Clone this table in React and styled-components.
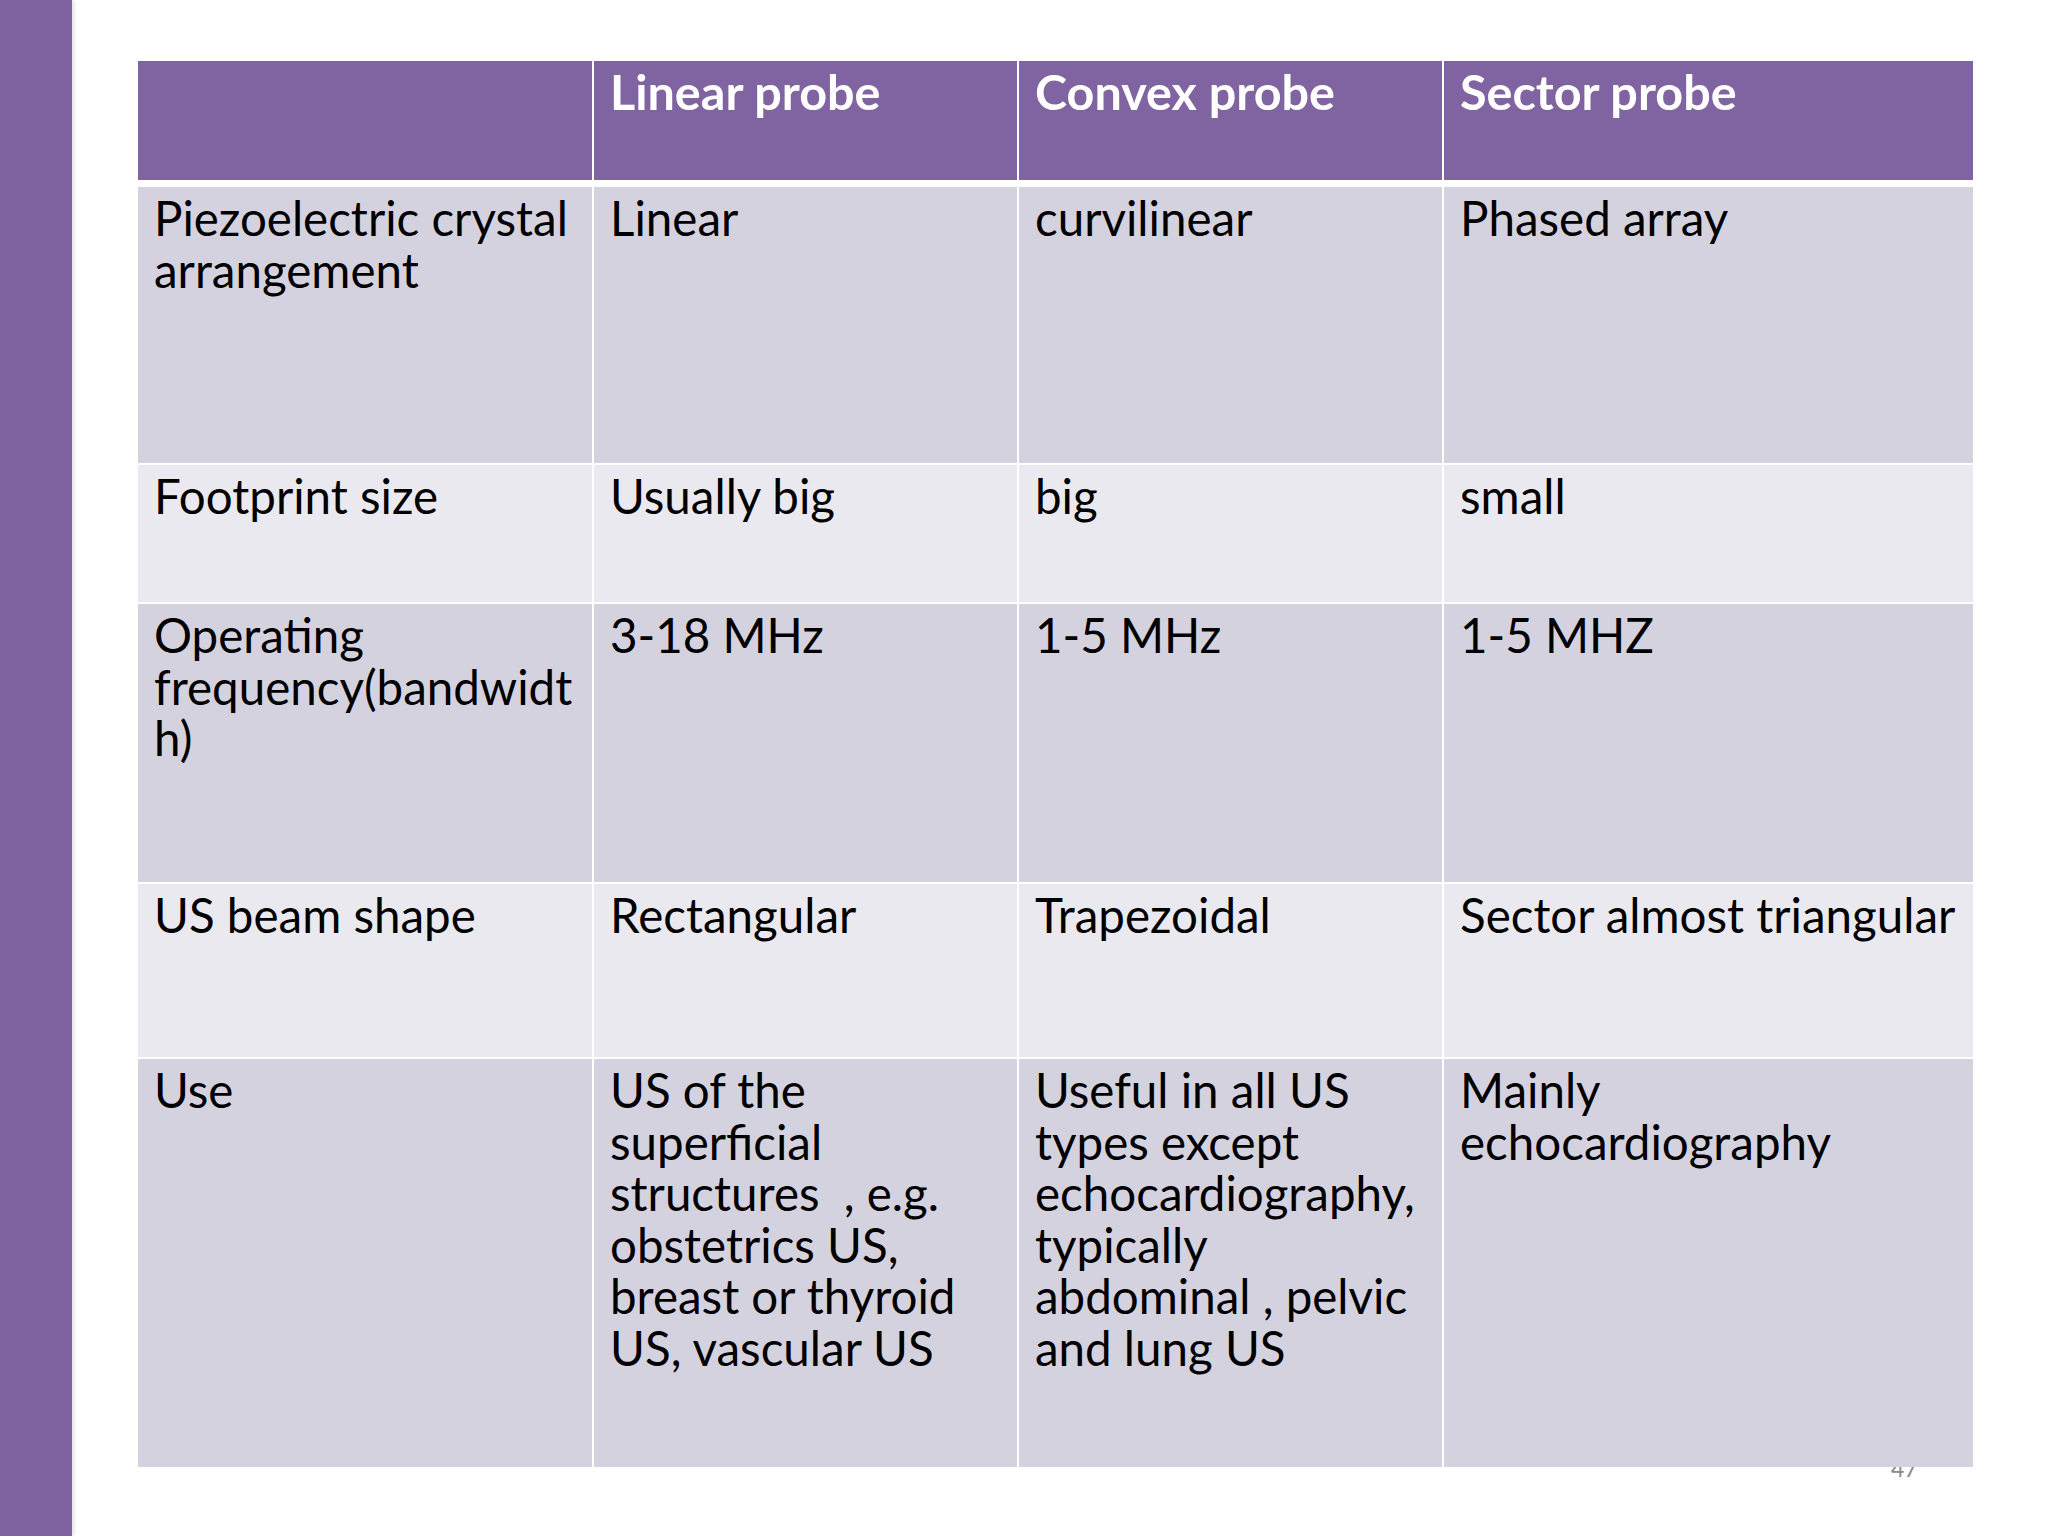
import React from 'react';
import styled, { createGlobalStyle } from 'styled-components';

const GlobalStyle = createGlobalStyle`
  html, body {
    margin: 0;
    padding: 0;
    background: #ffffff;
  }
  body {
    font-family: Lato, "Open Sans", "Liberation Sans", sans-serif;
  }
`;

const COLUMNS = '454px 423px 423px 529px';

const header = ['', 'Linear probe', 'Convex probe', 'Sector probe'];

const rows = [
  {
    height: 276,
    shade: 'dark',
    cells: [['Piezoelectric crystal', 'arrangement'], ['Linear'], ['curvilinear'], ['Phased array']],
  },
  {
    height: 137,
    shade: 'light',
    cells: [['Footprint size'], ['Usually big'], ['big'], ['small']],
  },
  {
    height: 278,
    shade: 'dark',
    cells: [['Operating', 'frequency(bandwidt', 'h)'], ['3-18 MHz'], ['1-5 MHz'], ['1-5 MHZ']],
  },
  {
    height: 173,
    shade: 'light',
    cells: [['US beam shape'], ['Rectangular'], ['Trapezoidal'], ['Sector almost triangular']],
  },
  {
    height: 408,
    shade: 'dark',
    cells: [
      ['Use'],
      ['US of the', 'superficial', 'structures  , e.g.', 'obstetrics US,', 'breast or thyroid', 'US, vascular US'],
      ['Useful in all US', 'types except', 'echocardiography,', 'typically', 'abdominal , pelvic', 'and lung US'],
      ['Mainly', 'echocardiography'],
    ],
  },
];

const App = () => {
  return (
    <>
      <GlobalStyle />
      <Slide>
        <Sidebar />
        <Content>
          <Table>
            <HeaderRow>
              {header.map((title, i) => (
                <HeaderCell key={i}>{title}</HeaderCell>
              ))}
            </HeaderRow>
            {rows.map((row, r) => (
              <Row key={r} $height={row.height}>
                {row.cells.map((lines, c) => (
                  <Cell key={c} $shade={row.shade}>
                    {lines.map((line, l) => (
                      <Line key={l}>{line}</Line>
                    ))}
                  </Cell>
                ))}
              </Row>
            ))}
          </Table>
          <PageNumber>47</PageNumber>
        </Content>
      </Slide>
    </>
  );
};

export default App;

const Slide = styled.div`
  width: 2048px;
  height: 1536px;
  display: flex;
  overflow: hidden;
  background: #ffffff;
`;

const Sidebar = styled.div`
  width: 72px;
  flex-shrink: 0;
  background-color: #7f63a1;
  box-shadow: 2px 0 4px rgba(128, 100, 162, 0.22);
`;

const Content = styled.div`
  position: relative;
  flex: 1;
  padding: 61px 0 0 66px;
`;

const Table = styled.div`
  position: relative;
  z-index: 1;
  width: 1835px;
  display: flex;
  flex-direction: column;
  gap: 2px;
  background: #ffffff;
`;

const HeaderRow = styled.div`
  display: grid;
  grid-template-columns: ${COLUMNS};
  column-gap: 2px;
  height: 119px;
  margin-bottom: 5px;
`;

const HeaderCell = styled.div`
  background-color: #8064a2;
  color: #ffffff;
  font-weight: 700;
  font-size: 48.5px;
  line-height: 51.5px;
  padding: 5px 16px;
  white-space: pre;
`;

const Row = styled.div`
  display: grid;
  grid-template-columns: ${COLUMNS};
  column-gap: 2px;
  height: ${(p) => p.$height}px;
`;

const Cell = styled.div`
  background-color: ${(p) => (p.$shade === 'dark' ? '#d5d2e0' : '#eae9ef')};
  color: #000000;
  font-size: 47.5px;
  line-height: 51.5px;
  padding: 5px 16px;
  overflow: hidden;
`;

const Line = styled.div`
  white-space: pre;
`;

const PageNumber = styled.div`
  position: absolute;
  left: 1819px;
  top: 1457px;
  font-size: 23px;
  line-height: 23px;
  color: #8b8b8b;
`;
